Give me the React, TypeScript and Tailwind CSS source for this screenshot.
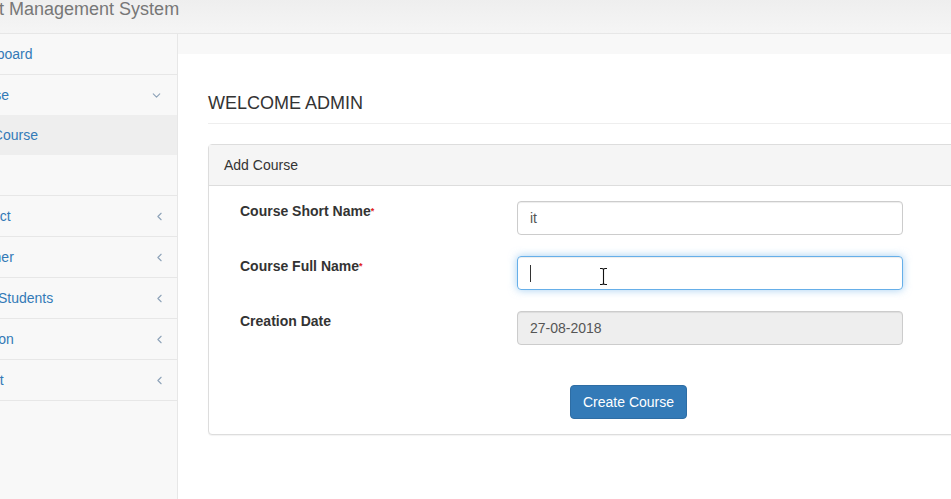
import { BarChart3, Book, BookOpen, ChevronDown, ChevronLeft, Clock, GraduationCap, LayoutDashboard, Users } from "lucide-react";

const App = () => {
  const menu = [
    { label: "Dashboard", icon: LayoutDashboard },
    { label: "Course", icon: BookOpen, open: true, children: ["Add Course", ""] },
    { label: "Subject", icon: Book, arrow: true },
    { label: "Teacher", icon: Users, arrow: true },
    { label: "View Students", icon: GraduationCap, arrow: true },
    { label: "Session", icon: Clock, arrow: true },
    { label: "Result", icon: BarChart3, arrow: true },
  ];

  return (
    <div className="h-screen w-full overflow-hidden bg-white font-['Liberation_Sans',Arial,sans-serif] text-[14px] text-[#333]">
      {/* page is scrolled: left and top parts are out of view */}
      <div className="-ml-[73px] -mt-[16px] flex h-[520px] w-[1366px] flex-col">
        {/* Navbar */}
        <nav className="flex h-[50px] shrink-0 items-center border-b border-[#e7e7e7] bg-gradient-to-b from-[#ebebeb] to-[#f5f5f5] px-[15px]">
          <span className="text-[18px] leading-[20px] text-[#777]">Student Management System</span>
        </nav>

        <div className="flex flex-1 bg-[#f8f8f8]">
          {/* Sidebar */}
          <aside className="w-[251px] shrink-0 border-r border-[#e7e7e7] bg-[#f8f8f8]">
            <ul>
              {menu.map((item, index) => (
                <li key={index} className="border-b border-[#e7e7e7]">
                  <div className="flex h-[40px] items-center pl-[15px] pr-[11px] text-[#337ab7]">
                    <span className="flex w-[18px] shrink-0 justify-center">
                      <item.icon size={14} />
                    </span>
                    <span className="ml-[4px] leading-[20px]">{item.label}</span>
                    {item.open && <ChevronDown size={13} strokeWidth={2} className="ml-auto mr-[3px] text-[#8da2b8]" />}
                    {item.arrow && <ChevronLeft size={13} strokeWidth={2} className="ml-auto text-[#8da2b8]" />}
                  </div>
                  {item.children && (
                    <ul>
                      {item.children.map((child, childIndex) => (
                        <li
                          key={childIndex}
                          className={childIndex === 0 ? "flex h-[40px] items-center bg-[#eeeeee] pl-[37px] text-[#337ab7]" : "flex h-[40px] items-center pl-[37px] text-[#337ab7]"}
                        >
                          {child}
                        </li>
                      ))}
                    </ul>
                  )}
                </li>
              ))}
            </ul>
          </aside>

          {/* Page wrapper */}
          <main className="flex-1 pt-[20px]">
            <div className="h-full bg-white px-[30px] pt-[40px]">
              <h1 className="mb-[20px] border-b border-[#eeeeee] pb-[9px] text-[18px] leading-[1.1] text-[#333]">
                WELCOME ADMIN
              </h1>

              <div className="rounded-[4px] border border-[#dddddd] bg-white shadow-[0_1px_1px_rgba(0,0,0,0.05)]">
                <div className="border-b border-[#dddddd] bg-[#f5f5f5] px-[15px] py-[10px] leading-[20px] text-[#333]">
                  Add Course
                </div>
                <div className="p-[15px]">
                  <div className="flex flex-col gap-[21px]">
                    <div className="grid grid-cols-[293px_386px]">
                      <label className="pl-[16px] font-bold leading-[20px]">
                        Course Short Name<span className="align-top text-[9px] text-[#e02020]">*</span>
                      </label>
                      <input
                        readOnly
                        defaultValue="it"
                        className="h-[34px] rounded-[4px] border border-[#cccccc] px-[12px] text-[#555] shadow-[inset_0_1px_1px_rgba(0,0,0,0.075)] outline-none"
                      />
                    </div>

                    <div className="grid grid-cols-[293px_386px]">
                      <label className="pl-[16px] font-bold leading-[20px]">
                        Course Full Name<span className="align-top text-[9px] text-[#e02020]">*</span>
                      </label>
                      <div className="relative">
                        <input
                          readOnly
                          className="h-[34px] w-full rounded-[4px] border border-[#66afe9] px-[12px] text-[#555] shadow-[inset_0_1px_1px_rgba(0,0,0,0.075),0_0_8px_rgba(102,175,233,0.6)] outline-none"
                        />
                        <span className="absolute left-[13px] top-[9px] h-[17px] w-px bg-[#333]" />
                        <svg className="absolute left-[82px] top-[11px]" width="9" height="19" viewBox="0 0 9 19" fill="none">
                          <path
                            d="M1 1.5h2c.9 0 1.5.6 1.5 1.5v13c0 .9-.6 1.5-1.5 1.5H1M8 1.5H6c-.9 0-1.5.6-1.5 1.5M4.5 16c0 .9.6 1.5 1.5 1.5h2"
                            stroke="#fff"
                            strokeWidth="2.6"
                          />
                          <path
                            d="M1 1.5h2c.9 0 1.5.6 1.5 1.5v13c0 .9-.6 1.5-1.5 1.5H1M8 1.5H6c-.9 0-1.5.6-1.5 1.5M4.5 16c0 .9.6 1.5 1.5 1.5h2"
                            stroke="#111"
                            strokeWidth="1.1"
                          />
                        </svg>
                      </div>
                    </div>

                    <div className="grid grid-cols-[293px_386px]">
                      <label className="pl-[16px] font-bold leading-[20px]">Creation Date</label>
                      <input
                        readOnly
                        defaultValue="27-08-2018"
                        className="h-[34px] rounded-[4px] border border-[#cccccc] bg-[#eeeeee] px-[12px] text-[#555] shadow-[inset_0_1px_1px_rgba(0,0,0,0.075)] outline-none"
                      />
                    </div>
                  </div>

                  <button className="ml-[346px] mt-[40px] h-[34px] rounded-[4px] border border-[#2e6da4] bg-[#337ab7] px-[12px] leading-[20px] text-white">
                    Create Course
                  </button>
                </div>
              </div>
            </div>
          </main>
        </div>
      </div>
    </div>
  );
};

export default App;
